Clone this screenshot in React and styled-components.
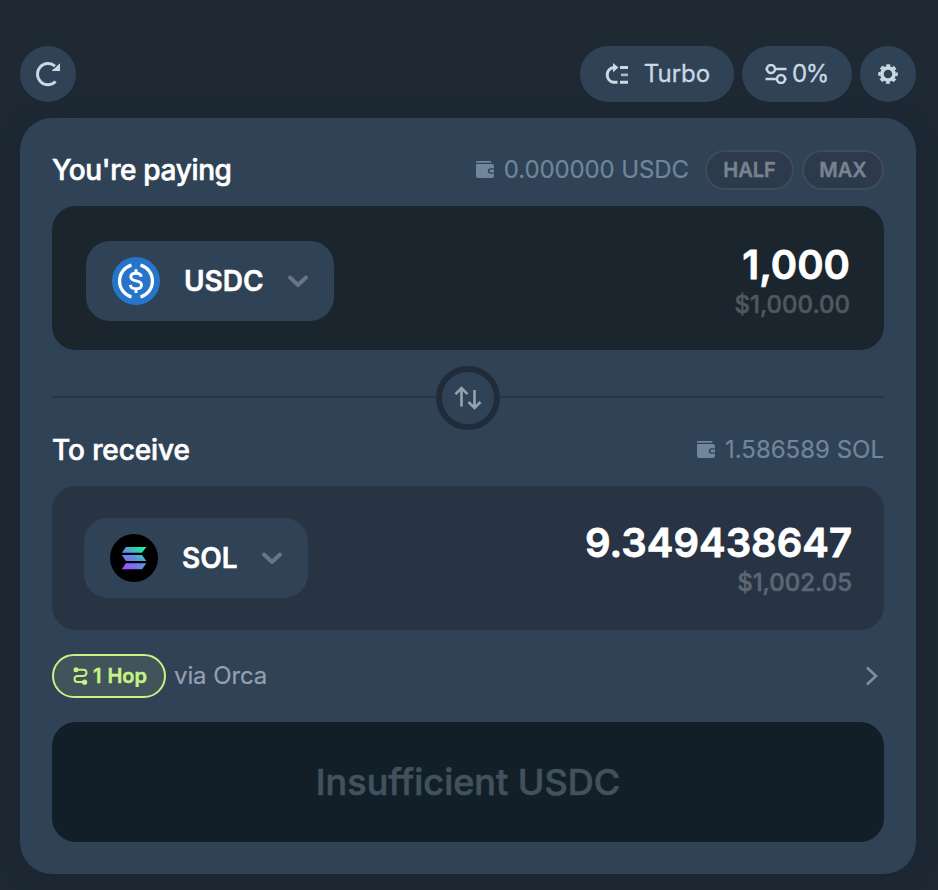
import React from 'react';
import styled, { createGlobalStyle } from 'styled-components';

const GlobalStyle = createGlobalStyle`
  * {
    box-sizing: border-box;
  }

  body {
    margin: 0;
    background-color: #1e2934;
    font-family: Inter, sans-serif;
    font-variant-ligatures: none;
  }

  button {
    font-family: inherit;
    border: none;
    padding: 0;
  }

  svg {
    display: block;
    flex: 0 0 auto;
  }
`;

function RefreshIcon() {
  return (
    <svg width="26" height="26" viewBox="0 0 26 26" fill="none">
      <path d="M20.6 20.6A10.6 10.6 0 1 1 20 5.1" stroke="currentColor" strokeWidth="2.9" />
      <path d="M25 2.2V10H17.2V9L20 7L22.5 4.6Z" fill="currentColor" />
    </svg>
  );
}

function RouteModeIcon() {
  return (
    <svg width="26" height="22" viewBox="0 0 26 22" fill="none">
      <path d="M14.5 19.3H10.5A7.5 7.5 0 0 1 10.5 4.5H11" stroke="currentColor" strokeWidth="3" />
      <path d="M10 0L15.5 4.6L10 9.2Z" fill="currentColor" />
      <path d="M17 4.5H25M17 19.3H25" stroke="currentColor" strokeWidth="3" />
      <path d="M18 11.9H25" stroke="currentColor" strokeWidth="2.6" opacity="0.8" />
    </svg>
  );
}

function SlippageIcon() {
  return (
    <svg width="22" height="20" viewBox="0 0 22 20" fill="none" stroke="currentColor" strokeWidth="2.5">
      <circle cx="6" cy="5" r="4" />
      <circle cx="16" cy="15" r="4" />
      <path d="M0.5 5H2M10 5H21.5M0.5 15H12M20 15H21.5" />
    </svg>
  );
}

function GearIcon() {
  return (
    <svg width="20" height="20" viewBox="0 0 20 20" fill="none" stroke="currentColor">
      <circle cx="10" cy="10" r="6.1" strokeWidth="3.6" />
      <circle cx="10" cy="10" r="8.6" strokeWidth="2.4" strokeDasharray="3.9 2.854" strokeDashoffset="1.95" />
    </svg>
  );
}

function WalletIcon() {
  return (
    <svg width="18" height="17" viewBox="0 0 18 17" fill="currentColor">
      <path d="M1.4 0H14A1.5 1.5 0 0 1 15.4 1.8H0.2A1.3 1.3 0 0 1 1.4 0Z" />
      <path d="M0 3H16Q18 3 18 5V7.2H14.6A2.8 2.8 0 0 0 14.6 12.8H18V15Q18 17 16 17H2Q0 17 0 15Z" />
      <path d="M14.8 8.6H18V11.4H14.8A1.4 1.4 0 0 1 14.8 8.6Z" />
    </svg>
  );
}

function UsdcLogo() {
  return (
    <svg width="48" height="48" viewBox="0 0 48 48" fill="none">
      <circle cx="24" cy="24" r="24" fill="#2775ca" />
      <g stroke="#fff" strokeWidth="3.2">
        <path d="M19.5 8.1A16.6 16.6 0 0 0 19.5 40" />
        <path d="M28.5 8.1A16.6 16.6 0 0 1 28.5 40" />
        <path
          d="M29.2 19.7C28.9 17.4 27.1 16.3 24 16.3C20.9 16.3 18.8 17.7 18.8 20C18.8 22.6 20.9 23.3 24 23.9C27.2 24.5 29.5 25.3 29.5 28C29.5 30.6 27.2 31.8 24 31.8C20.7 31.8 18.6 30.4 18.3 27.9"
          strokeWidth="2.9"
        />
        <path d="M24 12.2V16.6M24 31.5V36" strokeWidth="3" />
      </g>
    </svg>
  );
}

function SolLogo() {
  return (
    <svg width="48" height="48" viewBox="0 0 48 48">
      <defs>
        <linearGradient id="sol" x1="14" y1="37" x2="34" y2="11" gradientUnits="userSpaceOnUse">
          <stop offset="0.1" stopColor="#9c50f8" />
          <stop offset="0.5" stopColor="#5f8fe0" />
          <stop offset="0.9" stopColor="#19f0a0" />
        </linearGradient>
      </defs>
      <circle cx="24" cy="24" r="24" fill="#000" />
      <g fill="url(#sol)">
        <path d="M15.9 13H36.3L32.1 18.8H11.8Z" />
        <path d="M11.8 21.1H32.1L36.3 27H15.9Z" />
        <path d="M15.9 29.3H36.3L32.1 35.2H11.8Z" />
      </g>
    </svg>
  );
}

function ChevronDown() {
  return (
    <svg width="20" height="13" viewBox="0 0 20 13" fill="none">
      <path d="M2 2.5L10 10L18 2.5" stroke="#6a7484" strokeWidth="4" strokeLinecap="round" strokeLinejoin="round" />
    </svg>
  );
}

function SwitchIcon() {
  return (
    <svg width="28" height="24" viewBox="0 0 28 24" fill="none" stroke="currentColor" strokeWidth="2.6">
      <path d="M7.5 20.5V3M1.5 8.2L7.5 2.2L13.5 8.2" />
      <path d="M20.5 4V21.5M14.5 16L20.5 22L26.5 16" />
    </svg>
  );
}

function HopIcon() {
  return (
    <svg width="15" height="18" viewBox="0 0 15 18" fill="none">
      <path
        d="M3 2.8H10.4A3 3 0 0 1 10.4 8.9H4.6A3.1 3.1 0 0 0 4.6 15.1H11"
        stroke="currentColor"
        strokeWidth="2"
      />
      <circle cx="3" cy="2.7" r="2.5" fill="currentColor" />
      <circle cx="11.6" cy="15.2" r="2.6" fill="currentColor" />
    </svg>
  );
}

function Balance({ children }) {
  return (
    <StyledBalance>
      <WalletIcon />
      <span>{children}</span>
    </StyledBalance>
  );
}

function TokenButton({ logo, symbol }) {
  return (
    <StyledTokenButton>
      {logo}
      <span className="symbol">{symbol}</span>
      <ChevronDown />
    </StyledTokenButton>
  );
}

export default function App() {
  return (
    <Page>
      <GlobalStyle />
      <Toolbar>
        <RoundButton>
          <RefreshIcon />
        </RoundButton>
        <ToolbarGroup>
          <PillButton $width={154} $gap={15}>
            <RouteModeIcon />
            Turbo
          </PillButton>
          <PillButton $width={110} $gap={5} $spacing={-1.4}>
            <SlippageIcon />
            0%
          </PillButton>
          <RoundButton>
            <GearIcon />
          </RoundButton>
        </ToolbarGroup>
      </Toolbar>

      <Card>
        <FieldHeader>
          <Label $spacing={-0.35}>You're paying</Label>
          <FieldActions>
            <Balance>0.000000 USDC</Balance>
            <AmountButton $width={89}>HALF</AmountButton>
            <AmountButton $width={82}>MAX</AmountButton>
          </FieldActions>
        </FieldHeader>
        <AmountBox $color="#1b252d" $padding="6px 34px 0">
          <TokenButton logo={<UsdcLogo />} symbol="USDC" />
          <Amounts>
            <Amount>1,000</Amount>
            <FiatAmount $color="#4f5861">$1,000.00</FiatAmount>
          </Amounts>
        </AmountBox>

        <Divider>
          <SwitchButton>
            <SwitchIcon />
          </SwitchButton>
        </Divider>

        <FieldHeader>
          <Label $spacing={-0.1}>To receive</Label>
          <Balance>1.586589 SOL</Balance>
        </FieldHeader>
        <AmountBox $color="#283444" $padding="0 32px">
          <TokenButton logo={<SolLogo />} symbol="SOL" />
          <Amounts $offset={2}>
            <Amount>9.349438647</Amount>
            <FiatAmount $color="#5d6674">$1,002.05</FiatAmount>
          </Amounts>
        </AmountBox>

        <RouteRow>
          <HopBadge>
            <HopIcon />
            1 Hop
          </HopBadge>
          <RouteName>via Orca</RouteName>
          <svg width="14" height="20" viewBox="0 0 14 20" fill="none">
            <path d="M2 1.5L11 10L2 18.5" stroke="#838d9c" strokeWidth="2.6" />
          </svg>
        </RouteRow>

        <SubmitButton disabled>Insufficient USDC</SubmitButton>
      </Card>
    </Page>
  );
}

const Page = styled.div`
  height: 890px;
  width: 938px;
  padding: 46px 22px 16px 20px;
  overflow: hidden;
  background-color: #1e2934;
`;

const Toolbar = styled.div`
  display: flex;
  justify-content: space-between;
`;

const ToolbarGroup = styled.div`
  display: flex;
  gap: 8px;
`;

const RoundButton = styled.button`
  display: flex;
  align-items: center;
  justify-content: center;
  width: 56px;
  height: 56px;
  border-radius: 50%;
  background-color: #304256;
  color: #c7dae2;
`;

const PillButton = styled.button`
  display: flex;
  align-items: center;
  justify-content: center;
  gap: ${props => props.$gap}px;
  width: ${props => props.$width}px;
  height: 56px;
  padding: 0 1px 1px 0;
  border-radius: 28px;
  background-color: #304256;
  color: #c7dae2;
  font-size: 24px;
  letter-spacing: ${props => props.$spacing || 0}px;
  -webkit-text-stroke: 0.3px currentColor;
`;

const Card = styled.div`
  height: 756px;
  margin-top: 16px;
  padding: 32px;
  border-radius: 32px;
  background-color: #304256;
  box-shadow: 0 4px 40px rgba(22, 28, 44, 0.3);
`;

const FieldHeader = styled.div`
  display: flex;
  align-items: center;
  justify-content: space-between;
  height: 40px;
`;

const Label = styled.div`
  font-size: 28px;
  font-weight: 500;
  letter-spacing: ${props => props.$spacing}px;
  color: #fff;
  -webkit-text-stroke: 0.6px currentColor;
`;

const FieldActions = styled.div`
  display: flex;
  align-items: center;
  gap: 8px;
`;

const StyledBalance = styled.div`
  display: flex;
  align-items: center;
  gap: 10px;
  padding-bottom: 1px;
  color: #6f869b;
  font-size: 24px;
  -webkit-text-stroke: 0.2px currentColor;

  ${FieldActions} & {
    margin-right: 8px;
    letter-spacing: -0.1px;
  }
`;

const AmountButton = styled.button`
  width: ${props => props.$width}px;
  height: 40px;
  border: 2px solid #3f4b5a;
  border-radius: 20px;
  background-color: #2d3a4c;
  color: #7a8290;
  font-size: 20px;
  font-weight: 600;
  -webkit-text-stroke: 0.4px currentColor;
`;

const AmountBox = styled.div`
  display: flex;
  align-items: center;
  justify-content: space-between;
  height: 144px;
  margin-top: 16px;
  padding: ${props => props.$padding};
  border-radius: 24px;
  background-color: ${props => props.$color};
`;

const StyledTokenButton = styled.button`
  display: flex;
  align-items: center;
  height: 80px;
  padding: 0 26px;
  border-radius: 24px;
  background-color: #304256;
  color: #fff;

  .symbol {
    margin: 0 24px;
    font-size: 28px;
    font-weight: 600;
    -webkit-text-stroke: 0.5px currentColor;
  }
`;

const Amounts = styled.div`
  display: flex;
  flex-direction: column;
  align-items: flex-end;
  margin-top: ${props => props.$offset || 0}px;
`;

const Amount = styled.div`
  font-size: 40px;
  font-weight: 600;
  line-height: 46px;
  color: #fff;
  -webkit-text-stroke: 0.8px currentColor;
`;

const FiatAmount = styled.div`
  font-size: 24px;
  font-weight: 500;
  line-height: 32px;
  padding-top: 1px;
  margin-bottom: -1px;
  color: ${props => props.$color};
  -webkit-text-stroke: 0.5px currentColor;
`;

const Divider = styled.div`
  display: flex;
  align-items: center;
  height: 64px;
  margin-top: 16px;

  &::before,
  &::after {
    content: '';
    flex: 1;
    height: 2px;
    margin-bottom: 2px;
    background-color: #273545;
  }
`;

const SwitchButton = styled.button`
  display: flex;
  align-items: center;
  justify-content: center;
  width: 64px;
  height: 64px;
  border: 6px solid #202c39;
  border-radius: 50%;
  background-color: #304256;
  color: #97a2af;
`;

const RouteRow = styled.div`
  display: flex;
  align-items: center;
  height: 44px;
  margin: 24px 0;
  padding-right: 5px;
`;

const HopBadge = styled.div`
  display: flex;
  align-items: center;
  justify-content: center;
  gap: 5px;
  width: 114px;
  height: 44px;
  padding-left: 2px;
  border: 2px solid #c7f284;
  border-radius: 22px;
  background-color: #41545c;
  color: #c7f284;
  font-size: 20px;
  font-weight: 600;
  word-spacing: 1px;
  -webkit-text-stroke: 0.4px currentColor;
`;

const RouteName = styled.div`
  flex: 1;
  margin-left: 8px;
  padding-bottom: 1px;
  color: #989fad;
  font-size: 24px;
  letter-spacing: -0.1px;
  -webkit-text-stroke: 0.2px currentColor;
`;

const SubmitButton = styled.button`
  width: 100%;
  height: 120px;
  border-radius: 24px;
  background-color: #131f28;
  color: #42525d;
  font-size: 36px;
  font-weight: 500;
  font-variant-ligatures: none;
  -webkit-text-stroke: 0.6px currentColor;
`;
